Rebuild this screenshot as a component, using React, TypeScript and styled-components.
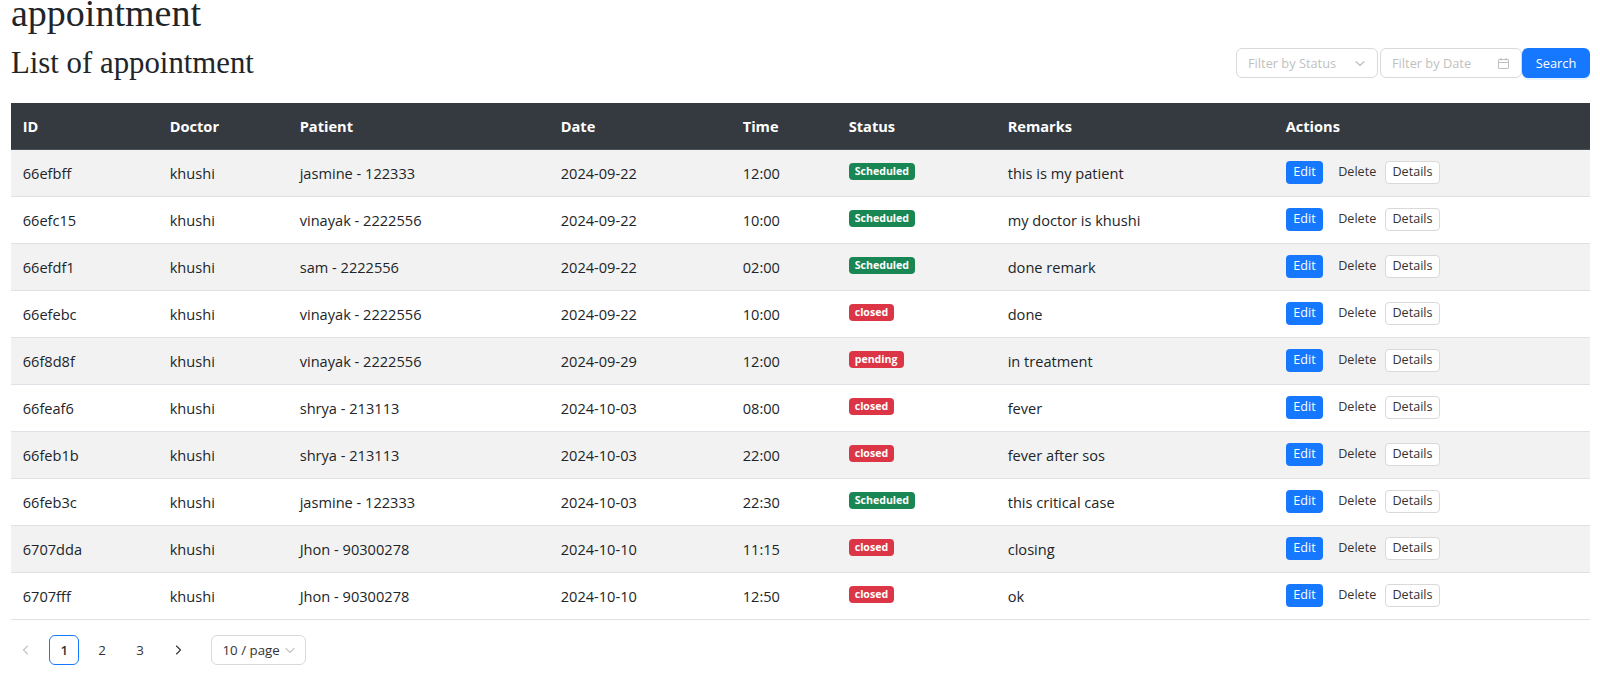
import React from "react";
import styled, { createGlobalStyle } from "styled-components";

const GlobalStyle = createGlobalStyle`
  body {
    margin: 0;
    background: #fff;
  }
`;

type Appointment = {
  id: string;
  doctor: string;
  patient: string;
  date: string;
  time: string;
  status: "Scheduled" | "closed" | "pending";
  remarks: string;
};

const appointments: Appointment[] = [
  { id: "66efbff", doctor: "khushi", patient: "jasmine - 122333", date: "2024-09-22", time: "12:00", status: "Scheduled", remarks: "this is my patient" },
  { id: "66efc15", doctor: "khushi", patient: "vinayak - 2222556", date: "2024-09-22", time: "10:00", status: "Scheduled", remarks: "my doctor is khushi" },
  { id: "66efdf1", doctor: "khushi", patient: "sam - 2222556", date: "2024-09-22", time: "02:00", status: "Scheduled", remarks: "done remark" },
  { id: "66efebc", doctor: "khushi", patient: "vinayak - 2222556", date: "2024-09-22", time: "10:00", status: "closed", remarks: "done" },
  { id: "66f8d8f", doctor: "khushi", patient: "vinayak - 2222556", date: "2024-09-29", time: "12:00", status: "pending", remarks: "in treatment" },
  { id: "66feaf6", doctor: "khushi", patient: "shrya - 213113", date: "2024-10-03", time: "08:00", status: "closed", remarks: "fever" },
  { id: "66feb1b", doctor: "khushi", patient: "shrya - 213113", date: "2024-10-03", time: "22:00", status: "closed", remarks: "fever after sos" },
  { id: "66feb3c", doctor: "khushi", patient: "jasmine - 122333", date: "2024-10-03", time: "22:30", status: "Scheduled", remarks: "this critical case" },
  { id: "6707dda", doctor: "khushi", patient: "Jhon - 90300278", date: "2024-10-10", time: "11:15", status: "closed", remarks: "closing" },
  { id: "6707fff", doctor: "khushi", patient: "Jhon - 90300278", date: "2024-10-10", time: "12:50", status: "closed", remarks: "ok" },
];

const columns = [
  { title: "ID", width: 147 },
  { title: "Doctor", width: 130 },
  { title: "Patient", width: 261 },
  { title: "Date", width: 182 },
  { title: "Time", width: 106 },
  { title: "Status", width: 159 },
  { title: "Remarks", width: 278 },
  { title: "Actions", width: 316 },
];

const Page = styled.div`
  padding: 0 10px 0 11px;
  font-family: "Open Sans", "Liberation Sans", sans-serif;
  color: #212529;
`;

const Title = styled.h1`
  font-family: "Liberation Serif", serif;
  font-weight: 400;
  font-size: 38px;
  line-height: 1.2;
  margin: -9px 0 8px;
  color: #212529;
`;

const Toolbar = styled.div`
  display: flex;
  justify-content: space-between;
  align-items: center;
  margin-bottom: 21px;
`;

const SubTitle = styled.h2`
  font-family: "Liberation Serif", serif;
  font-weight: 400;
  font-size: 30.8px;
  line-height: 1.2;
  margin: 0;
  color: #212529;
`;

const Filters = styled.div`
  display: flex;
  align-items: center;
  gap: 2px;
`;

const FilterBox = styled.div`
  box-sizing: border-box;
  width: 142px;
  height: 30px;
  padding: 0 11px;
  display: flex;
  align-items: center;
  justify-content: space-between;
  border: 1px solid #d9d9d9;
  border-radius: 6px;
  font-size: 12.8px;
  color: #bfbfbf;
  background: #fff;
`;

const SearchButton = styled.button`
  box-sizing: border-box;
  width: 68px;
  height: 30px;
  margin-left: -2px;
  border: none;
  border-radius: 6px;
  background: #1677ff;
  color: #fff;
  font-family: inherit;
  font-size: 12.8px;
  box-shadow: 0 2px 0 rgba(5, 145, 255, 0.1);
`;

const Table = styled.table`
  width: 100%;
  border-collapse: collapse;
  table-layout: fixed;
  font-size: 14.6px;
`;

const HeadCell = styled.th`
  height: 46px;
  padding: 0 11.7px;
  background: #343a40;
  color: #fff;
  font-weight: 700;
  text-align: left;
  border-bottom: 1px solid #4b5157;
`;

const Row = styled.tr<{ $striped: boolean }>`
  background: ${(p) => (p.$striped ? "#f2f2f2" : "#fff")};
`;

const Cell = styled.td`
  height: 46px;
  padding: 0 11.7px;
  border-bottom: 1px solid #dee2e6;
  vertical-align: middle;
  white-space: nowrap;
`;

const Badge = styled.span<{ $tone: "success" | "danger" }>`
  display: inline-block;
  padding: 3px 6px 3px;
  border-radius: 4px;
  font-size: 10.6px;
  line-height: 11px;
  font-weight: 700;
  color: #fff;
  background: ${(p) => (p.$tone === "success" ? "#198754" : "#dc3545")};
  vertical-align: 4px;
`;

const Actions = styled.div`
  display: flex;
  align-items: center;
  gap: 7.6px;
`;

const ActionButton = styled.button<{ $variant: "primary" | "text" | "default" }>`
  box-sizing: border-box;
  height: 23px;
  padding: ${(p) => (p.$variant === "text" ? "0 0 0 6.4px" : "0 6.6px")};
  border-radius: 4px;
  font-family: inherit;
  font-size: 12.6px;
  line-height: 1;
  border: 1px solid
    ${(p) => (p.$variant === "default" ? "#d9d9d9" : "transparent")};
  background: ${(p) => (p.$variant === "primary" ? "#1677ff" : p.$variant === "default" ? "#fff" : "transparent")};
  color: ${(p) => (p.$variant === "primary" ? "#fff" : "#333")};
`;

const Pager = styled.ul`
  display: flex;
  align-items: center;
  list-style: none;
  margin: 15px 0 0;
  padding: 0;
  font-size: 13.3px;
`;

const PagerItem = styled.li<{ $active?: boolean; $muted?: boolean }>`
  box-sizing: border-box;
  width: 30.4px;
  height: 30.4px;
  margin-right: 7.6px;
  display: flex;
  align-items: center;
  justify-content: center;
  border: 1px solid ${(p) => (p.$active ? "#1677ff" : "transparent")};
  border-radius: 6px;
  font-weight: ${(p) => (p.$active ? 600 : 400)};
  color: ${(p) => (p.$muted ? "#c4c4c4" : "#333")};
`;

const SizeChanger = styled.li`
  box-sizing: border-box;
  width: 95px;
  height: 30px;
  margin-left: 9.6px;
  padding: 0 9px 0 11px;
  display: flex;
  align-items: center;
  justify-content: space-between;
  border: 1px solid #d9d9d9;
  border-radius: 6px;
  color: #333;
`;

const Chevron = ({ dir, color }: { dir: "down" | "left" | "right"; color: string }) => {
  const d =
    dir === "down" ? "M2 4.5 L6 8.5 L10 4.5" : dir === "left" ? "M7.5 2 L3.5 6 L7.5 10" : "M4.5 2 L8.5 6 L4.5 10";
  return (
    <svg width="12" height="12" viewBox="0 0 12 12" fill="none">
      <path d={d} stroke={color} strokeWidth="1.1" strokeLinecap="round" strokeLinejoin="round" />
    </svg>
  );
};

const CalendarIcon = () => (
  <svg width="13" height="13" viewBox="0 0 13 13" fill="none" stroke="#bfbfbf" strokeWidth="1">
    <rect x="1.5" y="2.5" width="10" height="9" rx="0.5" />
    <line x1="1.5" y1="5.5" x2="11.5" y2="5.5" />
    <line x1="4" y1="1" x2="4" y2="3.5" />
    <line x1="9" y1="1" x2="9" y2="3.5" />
  </svg>
);

export default function App() {
  return (
    <Page>
      <GlobalStyle />
      <Title>appointment</Title>
      <Toolbar>
        <SubTitle>List of appointment</SubTitle>
        <Filters>
          <FilterBox>
            Filter by Status
            <Chevron dir="down" color="#bfbfbf" />
          </FilterBox>
          <FilterBox>
            Filter by Date
            <CalendarIcon />
          </FilterBox>
          <SearchButton>Search</SearchButton>
        </Filters>
      </Toolbar>
      <Table>
        <colgroup>
          {columns.map((c) => (
            <col key={c.title} style={{ width: c.width }} />
          ))}
        </colgroup>
        <thead>
          <tr>
            {columns.map((c) => (
              <HeadCell key={c.title}>{c.title}</HeadCell>
            ))}
          </tr>
        </thead>
        <tbody>
          {appointments.map((a, i) => (
            <Row key={a.id} $striped={i % 2 === 0}>
              <Cell>{a.id}</Cell>
              <Cell>{a.doctor}</Cell>
              <Cell>{a.patient}</Cell>
              <Cell>{a.date}</Cell>
              <Cell>{a.time}</Cell>
              <Cell>
                <Badge $tone={a.status === "Scheduled" ? "success" : "danger"}>{a.status}</Badge>
              </Cell>
              <Cell>{a.remarks}</Cell>
              <Cell>
                <Actions>
                  <ActionButton $variant="primary">Edit</ActionButton>
                  <ActionButton $variant="text">Delete</ActionButton>
                  <ActionButton $variant="default">Details</ActionButton>
                </Actions>
              </Cell>
            </Row>
          ))}
        </tbody>
      </Table>
      <Pager>
        <PagerItem $muted>
          <Chevron dir="left" color="#c4c4c4" />
        </PagerItem>
        <PagerItem $active>1</PagerItem>
        <PagerItem>2</PagerItem>
        <PagerItem>3</PagerItem>
        <PagerItem>
          <Chevron dir="right" color="#333" />
        </PagerItem>
        <SizeChanger>
          10 / page
          <Chevron dir="down" color="#c4c4c4" />
        </SizeChanger>
      </Pager>
    </Page>
  );
}
